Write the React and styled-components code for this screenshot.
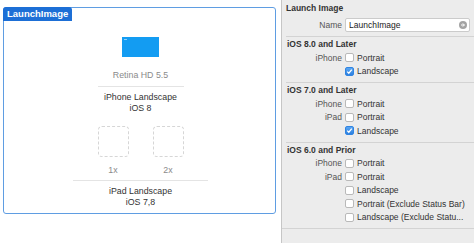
import styled, { createGlobalStyle } from 'styled-components'

const GlobalStyle = createGlobalStyle`
  html, body {
    margin: 0;
    padding: 0;
    background: #ffffff;
  }
  body {
    font-family: 'Liberation Sans', Arial, sans-serif;
    -webkit-font-smoothing: antialiased;
  }
`

const Page = styled.div`
  display: flex;
  width: 474px;
  height: 243px;
  overflow: hidden;
`

// left side: the asset canvas
const Canvas = styled.div`
  width: 281px;
  flex: none;
  padding: 7px 0 0 3px;
  box-sizing: border-box;
  background: #fff;
`

const SetPanel = styled.div`
  width: 273px;
  height: 207px;
  box-sizing: border-box;
  border: 1px solid #5f9de2;
  border-radius: 3px;
  display: flex;
  flex-direction: column;
  align-items: center;
  padding-left: 2px;
`

const SetTab = styled.div`
  align-self: flex-start;
  margin: -1px 0 0 -3px;
  height: 14px;
  padding: 0 4px;
  background: #1d6fd6;
  border-radius: 3px 3px 0 0;
  color: #fff;
  font-weight: bold;
  font-size: 9.5px;
  line-height: 14px;
`

const Group = styled.div`
  display: flex;
  flex-direction: column;
  align-items: center;
  margin-top: ${(p) => p.$top}px;
`

const Slots = styled.div`
  display: flex;
  padding: 0 ${(p) => p.$pad}px;
  border-bottom: 1px solid #e4e4e4;
`

const Slot = styled.div`
  width: ${(p) => p.$width}px;
  display: flex;
  flex-direction: column;
  align-items: center;
  padding-bottom: ${(p) => p.$bottom}px;
`

const Screen = styled.div`
  position: relative;
  width: 37px;
  height: 20px;
  background: #139cf2;
  margin-bottom: 13px;

  &::after {
    content: '';
    position: absolute;
    left: 2px;
    top: 2px;
    width: 3px;
    height: 1px;
    background: #8fd0fb;
  }
`

const EmptyWell = styled.div`
  width: 31px;
  height: 31px;
  box-sizing: border-box;
  border: 1px dashed #d6d6d6;
  border-radius: 4px;
  margin-bottom: 7.5px;
`

const SlotLabel = styled.div`
  font-size: 8.8px;
  line-height: 11px;
  color: #8a8a8a;
`

const Caption = styled.div`
  padding-top: 4.5px;
  text-align: center;
  font-size: 8.8px;
  line-height: 11px;
  color: #333;
`

// right side: attributes inspector
const Inspector = styled.div`
  flex: 1;
  background: #ececec;
  border-left: 1px solid #c6c6c6;
  display: flex;
  flex-direction: column;
  font-size: 8.5px;
  color: #333;
`

const Title = styled.div`
  padding: 1px 0 0 4px;
  height: 14px;
  line-height: 15px;
  font-weight: bold;
  color: #333;
`

const FieldRow = styled.div`
  display: grid;
  grid-template-columns: 60px 1fr;
  column-gap: 3px;
  align-items: center;
  margin-top: 3px;
  padding: 0 4px 4px 0;
`

const Label = styled.div`
  text-align: right;
  color: #555;
`

const TextField = styled.div`
  height: 14px;
  box-sizing: border-box;
  background: #fff;
  border: 1px solid #cbcbcb;
  border-radius: 2px;
  display: flex;
  align-items: center;
  justify-content: space-between;
  padding: 0 2px 0 3px;
  color: #222;
`

const Section = styled.div`
  margin-left: 4px;
  border-top: 1px solid #d3d3d3;
  padding: 1px 0 4px;
`

const SectionTitle = styled.div`
  height: 13px;
  line-height: 13px;
  padding-left: 1px;
  font-weight: bold;
  color: #333;
`

const Row = styled.div`
  display: grid;
  grid-template-columns: 56px 9px 1fr;
  column-gap: 3px;
  align-items: center;
  height: 13.5px;
  white-space: nowrap;
`

const Box = styled.span`
  width: 9px;
  height: 9px;
  box-sizing: border-box;
  border-radius: 2px;
  border: 1px solid ${(p) => (p.$on ? '#2f84e2' : '#b9b9b9')};
  background: ${(p) => (p.$on ? 'linear-gradient(#5aa6f2, #2c80e0)' : '#fff')};
  display: flex;
  align-items: center;
  justify-content: center;
`

const Footer = styled.div`
  border-top: 1px solid #d3d3d3;
`

function GoIcon() {
  return (
    <svg width="8" height="8" viewBox="0 0 8 8">
      <circle cx="4" cy="4" r="4" fill="#a3a3a3" />
      <path d="M2 4h3.4M3.8 2.4 5.4 4 3.8 5.6" stroke="#fff" strokeWidth="1" fill="none" />
    </svg>
  )
}

function Check({ label, on, text }) {
  return (
    <Row>
      <Label>{label}</Label>
      <Box $on={on}>
        {on && (
          <svg width="7" height="7" viewBox="0 0 7 7">
            <path d="M1.2 3.6 2.8 5.2 5.8 1.6" stroke="#fff" strokeWidth="1.3" fill="none" />
          </svg>
        )}
      </Box>
      <span>{text}</span>
    </Row>
  )
}

const sections = [
  {
    title: 'iOS 8.0 and Later',
    rows: [
      { label: 'iPhone', text: 'Portrait' },
      { label: '', text: 'Landscape', on: true },
    ],
  },
  {
    title: 'iOS 7.0 and Later',
    rows: [
      { label: 'iPhone', text: 'Portrait' },
      { label: 'iPad', text: 'Portrait' },
      { label: '', text: 'Landscape', on: true },
    ],
  },
  {
    title: 'iOS 6.0 and Prior',
    rows: [
      { label: 'iPhone', text: 'Portrait' },
      { label: 'iPad', text: 'Portrait' },
      { label: '', text: 'Landscape' },
      { label: '', text: 'Portrait (Exclude Status Bar)' },
      { label: '', text: 'Landscape (Exclude Statu...' },
    ],
  },
]

export default function App() {
  return (
    <>
      <GlobalStyle />
      <Page>
        <Canvas>
          <SetPanel>
            <SetTab>LaunchImage</SetTab>
            <Group $top={16}>
              <Slots $pad={0}>
                <Slot $width={86} $bottom={5}>
                  <Screen />
                  <SlotLabel>Retina HD 5.5</SlotLabel>
                </Slot>
              </Slots>
              <Caption>
                iPhone Landscape
                <br />
                iOS 8
              </Caption>
            </Group>
            <Group $top={12.5}>
              <Slots $pad={12.5}>
                <Slot $width={55} $bottom={4.5}>
                  <EmptyWell />
                  <SlotLabel>1x</SlotLabel>
                </Slot>
                <Slot $width={55} $bottom={4.5}>
                  <EmptyWell />
                  <SlotLabel>2x</SlotLabel>
                </Slot>
              </Slots>
              <Caption>
                iPad Landscape
                <br />
                iOS 7,8
              </Caption>
            </Group>
          </SetPanel>
        </Canvas>

        <Inspector>
          <Title>Launch Image</Title>
          <FieldRow>
            <Label>Name</Label>
            <TextField>
              <span>LaunchImage</span>
              <GoIcon />
            </TextField>
          </FieldRow>
          {sections.map((s) => (
            <Section key={s.title}>
              <SectionTitle>{s.title}</SectionTitle>
              {s.rows.map((r, i) => (
                <Check key={i} label={r.label} text={r.text} on={r.on} />
              ))}
            </Section>
          ))}
          <Footer />
        </Inspector>
      </Page>
    </>
  )
}
